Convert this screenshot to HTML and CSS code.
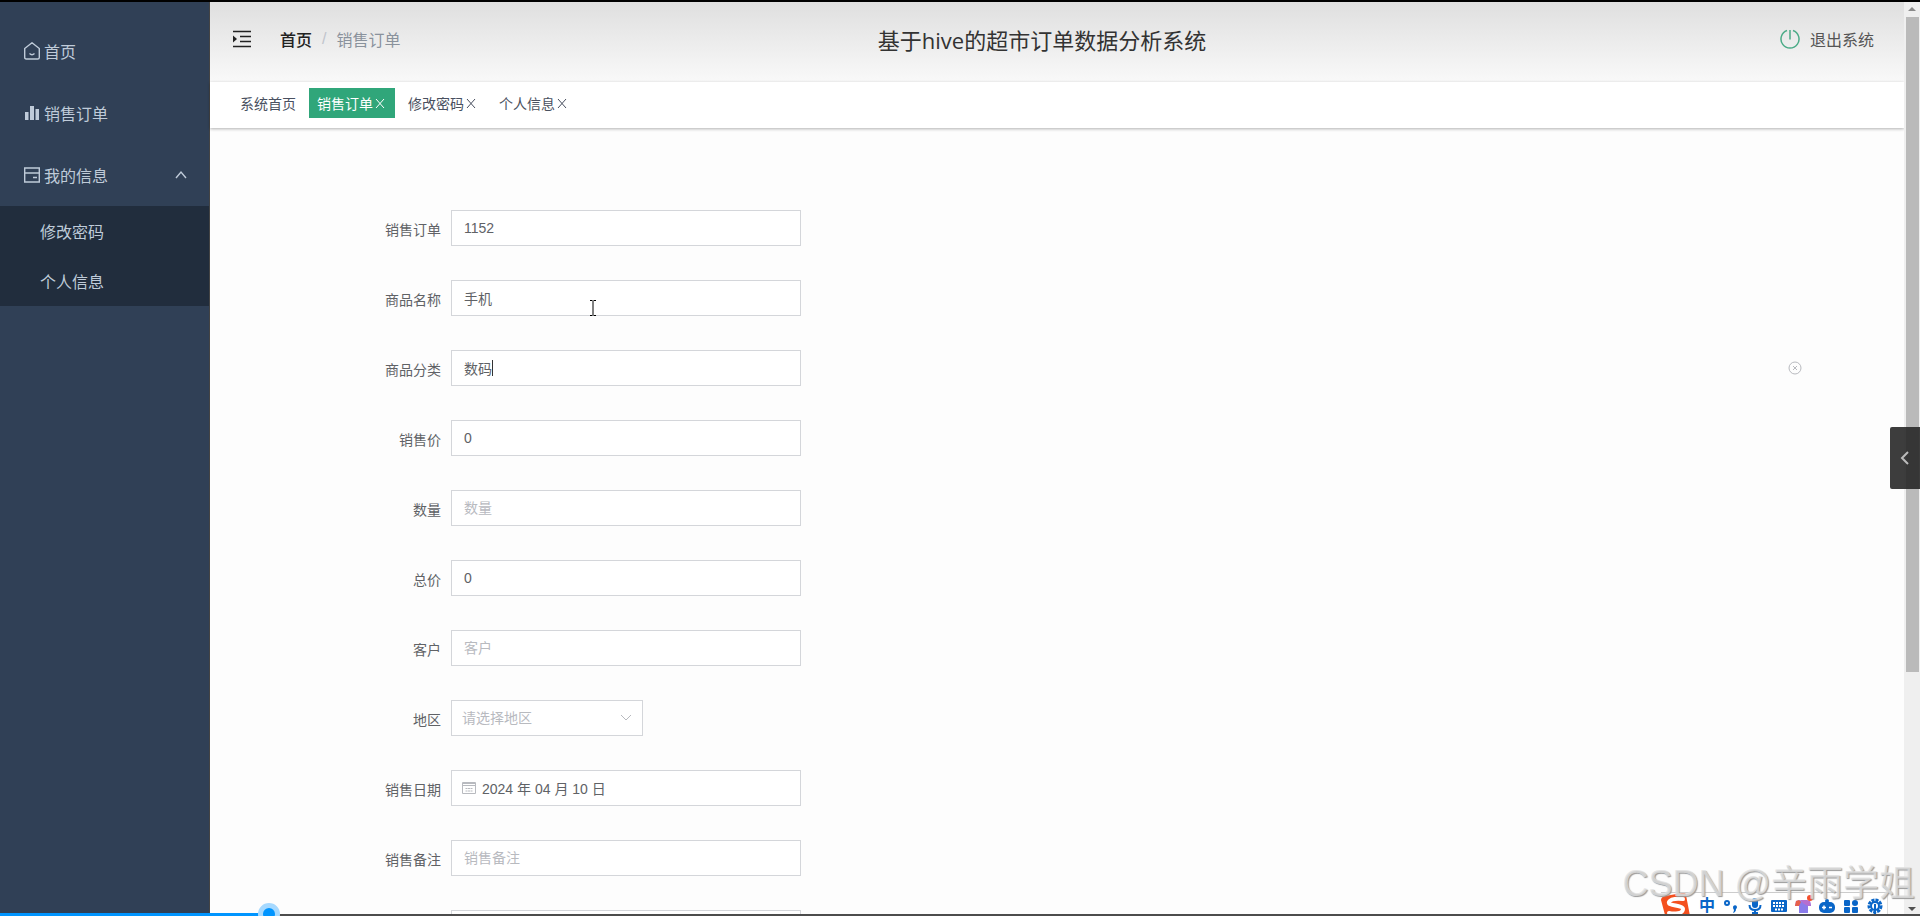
FILE: index.html
```html
<!DOCTYPE html>
<html lang="zh-CN">
<head>
    <meta charset="UTF-8">
    <meta name="viewport" content="width=device-width, initial-scale=1.0">
    <title>基于hive的超市订单数据分析系统</title>
    <link rel="stylesheet" href="styles.css">
</head>
<body>
    <div class="app">
        <!-- Sidebar -->
        <nav class="sidebar">
            <a class="menu-item" href="#">
                <svg class="menu-icon" viewBox="0 0 16 18"><path d="M.7 6.500 8 .8l7.300 5.700v9q0 1.500-1.500 1.500H2.200Q.7 17 .7 15.500ZM5.500 11.500q2.500 2.500 5 0" /></svg>
                <span>首页</span>
            </a>
            <a class="menu-item" href="#">
                <svg class="menu-icon solid" viewBox="0 0 16 18"><path d="M1 8h3.500v8H1zM6 2h4v14H6zM11.500 5H15v11h-3.500z" /></svg>
                <span>销售订单</span>
            </a>
            <a class="menu-item" href="#">
                <svg class="menu-icon" viewBox="0 0 16 18"><path d="M.7 2h14.600v14H.7zM1 7h14M9 11.500h4" /></svg>
                <span>我的信息</span>
                <svg class="menu-arrow" viewBox="0 0 12 12"><path d="m1 9 5-6 5 6" /></svg>
            </a>
            <div class="submenu">
                <a class="submenu-item" href="#">修改密码</a>
                <a class="submenu-item" href="#">个人信息</a>
            </div>
        </nav>

        <div class="main">
            <header class="header">
                <div class="header-left">
                    <svg class="fold-icon" viewBox="0 0 20 18"><path d="M1 1.500h18M8 6.500h11M8 11.500h11M1 16.500h18" /><path class="fill" d="m1 5.500 4 3.500-4 3.500z" /></svg>
                    <div class="breadcrumb">
                        <a class="crumb-home" href="#">首页</a>
                        <span class="crumb-sep">/</span>
                        <span>销售订单</span>
                    </div>
                </div>
                <h1 class="title">基于hive的超市订单数据分析系统</h1>
                <div class="header-right">
                    <button class="logout" type="button">
                        <svg class="power-icon" viewBox="0 0 20 20"><path d="M7 1.500a9 9 0 1 0 6 0M10 1v9.500" /></svg>
                        退出系统
                    </button>
                </div>
            </header>

            <div class="tabs">
                <a class="tab" href="#">系统首页</a>
                <a class="tab active" href="#">销售订单<svg class="tab-close" viewBox="0 0 14 14"><path d="m3 3 8 9M11 3l-8 9" /></svg></a>
                <a class="tab" href="#">修改密码<svg class="tab-close" viewBox="0 0 14 14"><path d="m3 3 8 9M11 3l-8 9" /></svg></a>
                <a class="tab" href="#">个人信息<svg class="tab-close" viewBox="0 0 14 14"><path d="m3 3 8 9M11 3l-8 9" /></svg></a>
            </div>

            <form class="form">
                <div class="form-item">
                    <label for="orderNo">销售订单</label>
                    <input type="text" id="orderNo" value="1152">
                </div>
                <div class="form-item">
                    <label for="goodsName">商品名称</label>
                    <input type="text" id="goodsName" value="手机">
                    <svg class="text-cursor" viewBox="0 0 8 16"><path d="M1 .5h2.500M4.500.5H7M1 15.500h2.500M4.500 15.500H7M4 1v14" /></svg>
                </div>
                <div class="form-item">
                    <label for="goodsType">商品分类</label>
                    <div class="input-wrap">
                        <input type="text" id="goodsType" value="数码">
                        <span class="caret"></span>
                    </div>
                    <button class="clear" type="button" aria-label="清空">
                        <svg viewBox="0 0 14 14"><circle cx="7" cy="7" r="6" /><path d="m5 5 4 4M9 5l-4 4" /></svg>
                    </button>
                </div>
                <div class="form-item">
                    <label for="price">销售价</label>
                    <input type="text" id="price" value="0">
                </div>
                <div class="form-item">
                    <label for="amount">数量</label>
                    <input type="text" id="amount" placeholder="数量">
                </div>
                <div class="form-item">
                    <label for="total">总价</label>
                    <input type="text" id="total" value="0">
                </div>
                <div class="form-item">
                    <label for="customer">客户</label>
                    <input type="text" id="customer" placeholder="客户">
                </div>
                <div class="form-item">
                    <label for="area">地区</label>
                    <div class="select-wrap">
                        <select id="area">
                            <option>请选择地区</option>
                        </select>
                        <svg class="select-arrow" viewBox="0 0 12 8"><path d="m1 1 5 5 5-5" /></svg>
                    </div>
                </div>
                <div class="form-item">
                    <label for="saleDate">销售日期</label>
                    <div class="input-wrap">
                        <svg class="date-icon" viewBox="0 0 14 14"><path d="M.5 1.500h13v11H.5zM1 4.500h12M3.500 7.500h2M6 7.500h2M8.500 7.500h2M3.500 10h2M6 10h2M8.500 10h2M1 2.500h12" /></svg>
                        <input type="text" id="saleDate" class="date-input" value="2024 年 04 月 10 日">
                    </div>
                </div>
                <div class="form-item">
                    <label for="remark">销售备注</label>
                    <input type="text" id="remark" placeholder="销售备注">
                </div>
                <div class="form-item">
                    <label for="extra"></label>
                    <input type="text" id="extra">
                </div>
            </form>
        </div>

        <div class="scrollbar">
            <span class="scroll-up"></span>
            <span class="scroll-thumb"></span>
            <span class="scroll-down"></span>
        </div>
    </div>

    <!-- Drawer handle on the right edge -->
    <button class="side-handle" type="button" aria-label="展开">
        <svg viewBox="0 0 10 14"><path d="M8 1 2 7l6 6" /></svg>
    </button>

    <!-- Input method bar -->
    <div class="ime">
        <svg class="ime-logo" viewBox="0 0 30 26"><path fill="#f4501e" d="M0 7Q0 4 4 3L21 0q4-1 4 2l4 21q0 3-3 3H8q-3 0-4-4Z" /><path fill="none" stroke="#fff" stroke-width="4" stroke-linecap="round" d="M22 6Q10 5 8 9c-2 4 14 3 14 7 0 5-9 5-14 4" /></svg>
        <span class="ime-lang">中</span>
        <svg class="ime-icon" viewBox="0 0 16 16"><circle cx="4" cy="5" r="2" fill="none" stroke="#0a66c8" stroke-width="2" /><path d="M10 9a2 2 0 1 1 3 2q0 3-3 4 1-2 1-3-1-1-1-3" /></svg>
        <svg class="ime-icon" viewBox="0 0 16 16"><rect x="5" y="0" width="6" height="10" rx="3" /><path fill="none" stroke="#0a66c8" stroke-width="2" d="M2.500 7q0 5 5.500 5t5.500-5M8 12v3M5 15h6" /></svg>
        <svg class="ime-icon" viewBox="0 0 16 16"><rect y="2" width="16" height="12" rx="1" /><path stroke="#fff" stroke-width="2" stroke-dasharray="2 1" d="M2 5h12M2 8h12M4 11.500h8" /></svg>
        <svg class="ime-icon shirt" viewBox="0 0 16 16"><path fill="#8a7bea" d="m1 3 4-1q3 3 6 0l4 1 1 5h-3v7H4V8H0z" /><path fill="#e8604c" d="m1 3 3-1 2 2-2 4H0z" /><path fill="#b56fd0" d="m5 2 6 0 4 1 1 5h-3L9 6z" /><circle cx="15" cy="0" r="3" fill="#f4502e" /></svg>
        <svg class="ime-icon" viewBox="0 0 16 16"><rect y="4" width="16" height="11" rx="5" /><circle cx="8" cy="3" r="2" /><path stroke="#fff" stroke-width="1.500" d="M3 9.500h4M5 7.500v4M10 9.500h3" /></svg>
        <svg class="ime-icon" viewBox="0 0 16 16"><rect x="1" y="2" width="6" height="6" rx="1" /><rect x="9" y="2" width="6" height="6" rx="3" /><rect x="1" y="9" width="6" height="6" rx="1" /><rect x="9" y="9" width="6" height="6" rx="1" /></svg>
        <svg class="ime-icon" viewBox="0 0 16 16"><circle cx="8" cy="8" r="6" fill="none" stroke="#0a66c8" stroke-width="3" stroke-dasharray="3 1" /><circle cx="8" cy="8" r="4" fill="none" stroke="#0a66c8" stroke-width="2" /><path d="M7 6h2v10H7z" /></svg>
    </div>

    <div class="watermark">CSDN @辛雨学姐</div>

    <!-- Playback bar -->
    <div class="progress">
        <div class="progress-played"></div>
    </div>
</body>
</html>
```
FILE: styles.css
```css
*, *::after {
    margin: 0;
    padding: 0;
    box-sizing: border-box;
}

body {
    height: 100vh;
    overflow: hidden;
    position: relative;
    background: #fdfdfd;
    font-family: "Liberation Sans", "Noto Sans CJK SC", sans-serif;
    font-size: 14px;
    color: #606266;
}

a {
    color: inherit;
    text-decoration: none;
}

svg {
    fill: none;
    stroke: currentColor;
    flex-shrink: 0;
}

input, select, button {
    font: inherit;
    color: inherit;
}

.app {
    display: flex;
    height: 100vh;
    border-top: 2px solid #000;
}

/* Sidebar */
.sidebar {
    width: 210px;
    flex-shrink: 0;
    padding-top: 18px;
    background: #304056;
    border-right: 1px solid #444;
    color: #bfcbd9;
    font-size: 16px;
}

.menu-item {
    display: flex;
    align-items: center;
    gap: 4px;
    height: 62px;
    padding: 0 22px 0 24px;
}

.menu-icon {
    width: 16px;
    height: 18px;
    stroke-width: 1.4;
}

.menu-icon.solid {
    fill: currentColor;
    stroke: none;
}

.menu-arrow {
    width: 12px;
    height: 12px;
    margin-left: auto;
    stroke-width: 1.4;
}

.submenu {
    background: #212d3d;
}

.submenu-item {
    display: flex;
    align-items: center;
    height: 50px;
    padding-left: 40px;
}

/* Header */
.main {
    flex: 1;
    min-width: 0;
}

.header {
    display: grid;
    grid-template-columns: 1fr auto 1fr;
    align-items: center;
    height: 80px;
    padding: 0 30px 6px 0;
    background: linear-gradient(#dfdfdf, #f9f9f9);
}

.header-left {
    display: flex;
    align-items: center;
    padding-left: 22px;
}

.fold-icon {
    width: 20px;
    height: 18px;
    margin-right: 28px;
    color: #222;
    stroke-width: 1.5;
}

.fold-icon .fill {
    fill: currentColor;
    stroke: none;
}

.breadcrumb {
    display: flex;
    align-items: center;
    font-size: 16px;
    color: #8a929c;
}

.crumb-home {
    font-weight: 500;
    color: #222;
}

.crumb-sep {
    margin: 0 10px;
    color: #c0c4cc;
}

.title {
    font-family: "Open Sans", "Noto Sans CJK SC", sans-serif;
    font-size: 22px;
    font-weight: 400;
    color: #333;
}

.header-right {
    display: flex;
    justify-content: flex-end;
}

.logout {
    display: flex;
    align-items: center;
    gap: 10px;
    border: none;
    background: none;
    font-size: 16px;
    color: #555;
    cursor: pointer;
}

.power-icon {
    width: 20px;
    height: 20px;
    color: #4bab87;
    stroke-width: 1.5;
}

/* Tabs */
.tabs {
    display: flex;
    align-items: flex-start;
    gap: 5px;
    height: 46px;
    padding: 6px 22px;
    background: #fff;
    box-shadow: 0 1px 3px rgba(0, 0, 0, 0.3);
    color: #495060;
}

.tab {
    display: flex;
    align-items: center;
    height: 30px;
    padding: 0 8px;
}

.tab.active {
    background: #30a67a;
    color: #fff;
}

.tab-close {
    width: 14px;
    height: 14px;
}

/* Form */
.form {
    padding: 82px 90px 0 130px;
}

.form-item {
    display: flex;
    align-items: center;
    position: relative;
    height: 36px;
    margin-bottom: 34px;
}

.form-item label {
    width: 111px;
    padding: 2px 10px 0 0;
    text-align: right;
}

.form-item input {
    width: 350px;
    height: 36px;
    padding: 0 12px;
    border: 1px solid #d4d6da;
    background: #fff;
    outline: none;
}

.form-item input::placeholder {
    color: #b8babf;
}

.input-wrap, .select-wrap {
    position: relative;
}

.form-item .date-input {
    padding-left: 30px;
}

.date-icon {
    position: absolute;
    left: 11px;
    top: 11px;
    width: 14px;
    height: 14px;
    color: #b8babf;
}

.caret {
    position: absolute;
    left: 41px;
    top: 10px;
    width: 1px;
    height: 16px;
    background: #333;
}

.text-cursor {
    position: absolute;
    left: 249px;
    top: 20px;
    width: 8px;
    height: 16px;
    color: #000;
}

.clear {
    display: flex;
    margin-left: auto;
    margin-right: 12px;
    border: none;
    background: none;
    color: #b8babf;
}

.clear svg {
    width: 14px;
    height: 14px;
}

.select-wrap select {
    width: 192px;
    height: 36px;
    padding: 0 10px;
    border: 1px solid #d4d6da;
    border-radius: 0;
    background: #fff;
    color: #b8babf;
    appearance: none;
}

.select-arrow {
    position: absolute;
    right: 11px;
    top: 14px;
    width: 12px;
    height: 8px;
    color: #b8babf;
}

/* Scrollbar */
.scrollbar {
    display: flex;
    flex-direction: column;
    align-items: center;
    width: 16px;
    padding: 5px 0;
    background: #efefef;
}

.scroll-up, .scroll-down {
    border: 4px solid transparent;
}

.scroll-up {
    border-top: none;
    border-bottom-color: #8a8a8a;
}

.scroll-down {
    margin-top: auto;
    border-bottom: none;
    border-top-color: #505050;
}

.scroll-thumb {
    width: 13px;
    height: 72.5%;
    margin-top: 6px;
    background: #bababa;
}

/* Overlays */
.side-handle {
    position: absolute;
    right: 0;
    top: 427px;
    display: flex;
    align-items: center;
    justify-content: center;
    width: 30px;
    height: 62px;
    border: none;
    border-radius: 2px 0 0 2px;
    background: rgba(40, 40, 40, 0.9);
    color: #bbb;
}

.side-handle svg {
    width: 10px;
    height: 14px;
    stroke-width: 2;
}

.ime {
    position: absolute;
    right: 32px;
    bottom: 0;
    display: flex;
    align-items: center;
    gap: 8px;
    height: 24px;
    padding: 2px 4px 0 0;
    border-top: 1px solid #ccc;
    border-right: 1px solid #ddd;
    background: #fff;
}

.ime-logo {
    width: 30px;
    height: 26px;
    stroke: none;
}

.ime-lang {
    font-size: 16px;
    font-weight: 700;
    line-height: 20px;
    color: #0a66c8;
}

.ime-icon {
    width: 16px;
    height: 16px;
    fill: #0a66c8;
    stroke: none;
}

.ime-icon.shirt {
    overflow: visible;
}

.watermark {
    position: absolute;
    right: 5px;
    bottom: 4px;
    font-size: 36px;
    line-height: 56px;
    color: rgba(225, 225, 225, 0.8);
    text-shadow: 1px 1px 1px #999;
    white-space: nowrap;
}

.progress {
    position: absolute;
    left: 0;
    right: 0;
    bottom: 0;
    height: 2px;
    background: #4c4c4c;
}

.progress-played {
    position: relative;
    width: 14%;
    height: 3px;
    margin-top: -1px;
    background: #0095ff;
}

.progress-played::after {
    content: "";
    position: absolute;
    right: -11px;
    top: -10px;
    width: 22px;
    height: 22px;
    border: 5px solid #a6d9ff;
    border-radius: 50%;
    background: #0095ff;
}
```
